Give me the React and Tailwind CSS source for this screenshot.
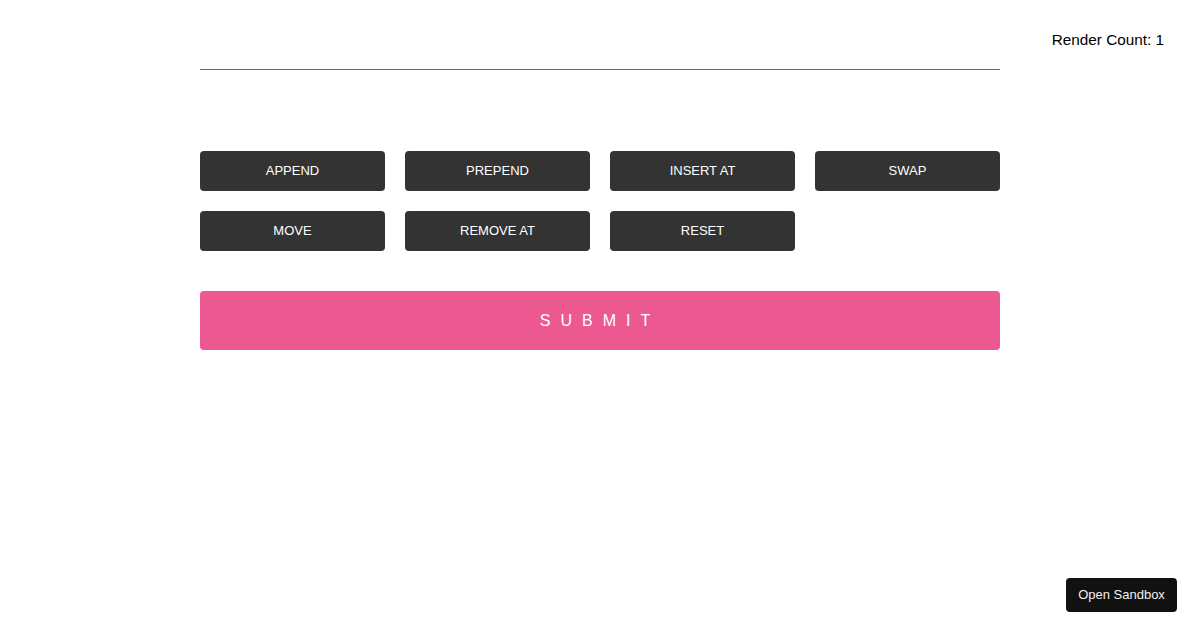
export default function App() {
  const btns = ["APPEND", "PREPEND", "INSERT AT", "SWAP", "MOVE", "REMOVE AT", "RESET"];
  return (
    <div className="relative min-h-[630px] w-full bg-white" style={{ fontFamily: '"Liberation Sans", Arial, sans-serif' }}>
      <div className="absolute right-[36px] top-[31px] text-[15.3px] leading-[18px] text-black">Render Count: 1</div>
      <div className="mx-auto w-[800px] pt-[69px]">
        <div className="h-px w-full bg-[#59698a]" />
        <div className="mt-[81px] grid grid-cols-4 gap-x-5 gap-y-5">
          {btns.map((b) => (
            <button key={b} className="h-10 rounded-[4px] bg-[#333333] text-[13px] text-white">
              {b}
            </button>
          ))}
        </div>
        <button className="mt-10 h-[59px] w-full rounded-[4px] bg-[#ec5990] text-[16px] tracking-[10px] text-white">
          SUBMIT
        </button>
      </div>
      <button className="absolute bottom-[18px] right-[23px] h-[34px] w-[111px] rounded-[4px] bg-[#111111] text-[13px] text-[#f0f0f0]">
        Open Sandbox
      </button>
    </div>
  );
}
